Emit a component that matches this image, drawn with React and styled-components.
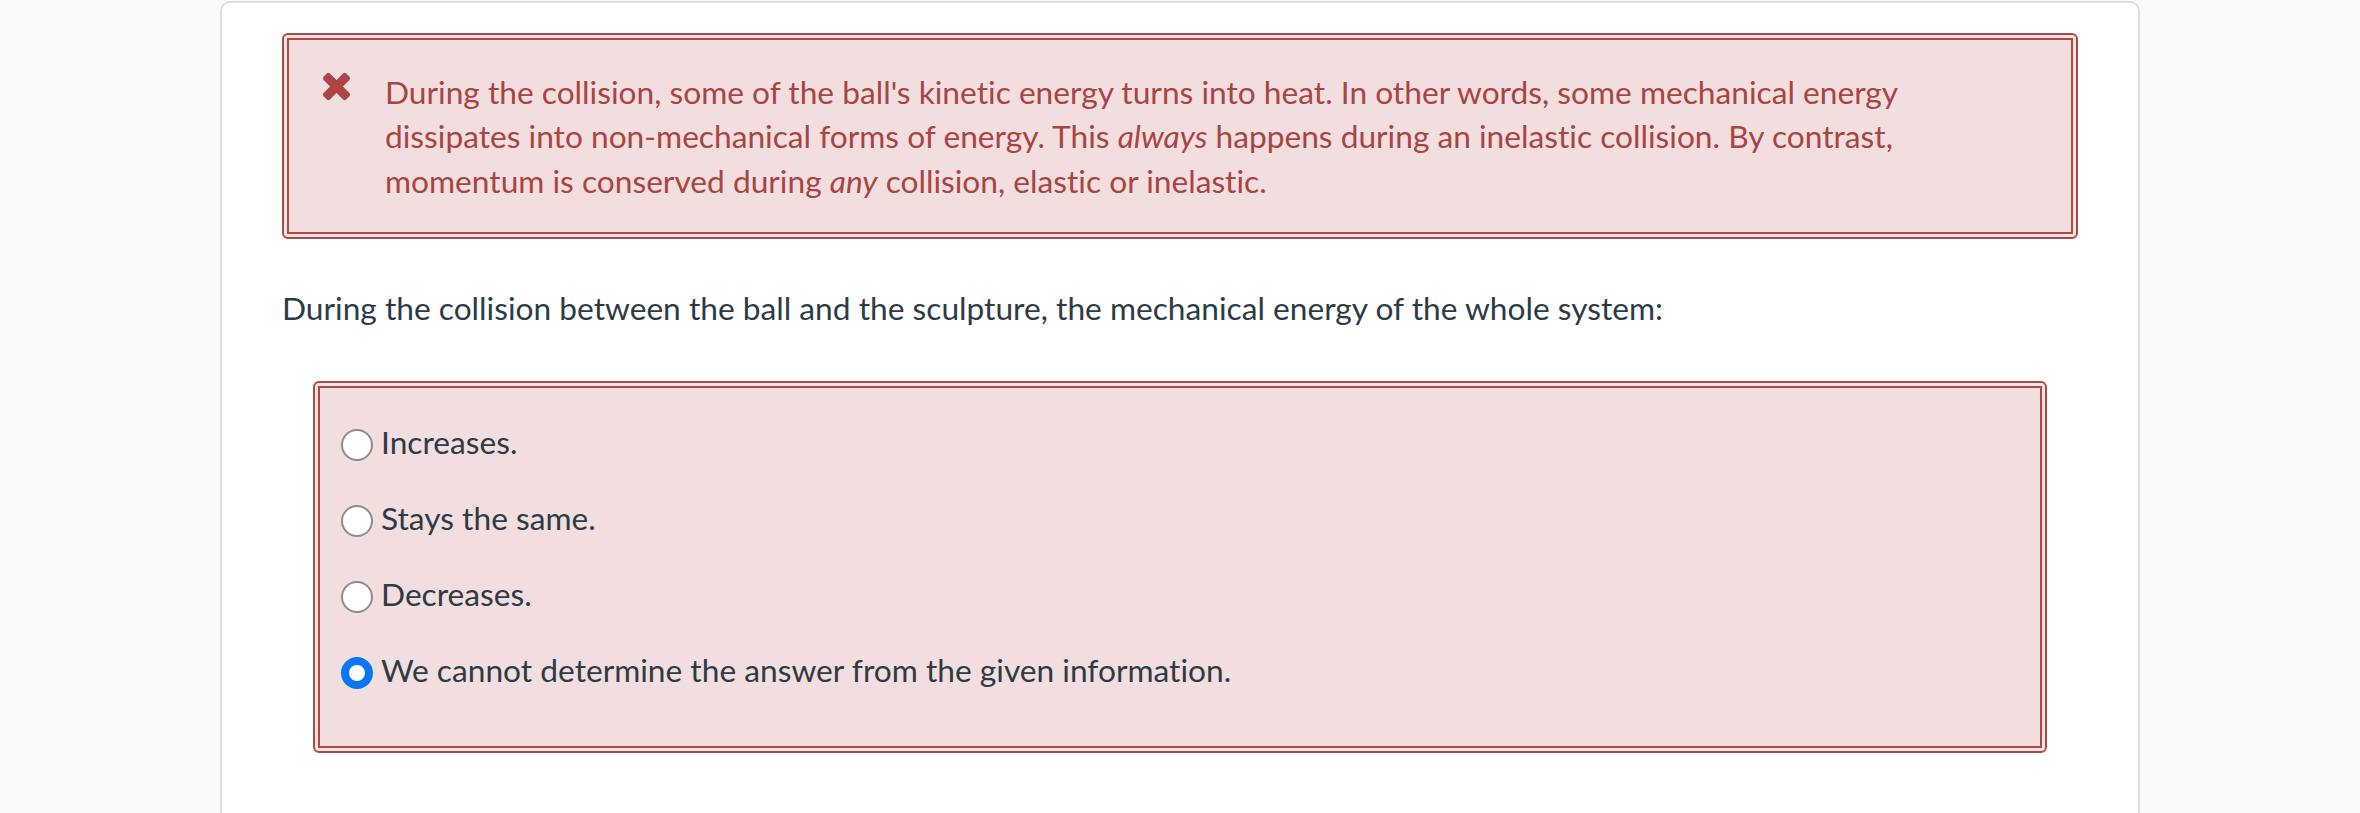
import React from "react"
import styled, { createGlobalStyle } from "styled-components"

const GlobalStyle = createGlobalStyle`
  html, body {
    margin: 0;
    padding: 0;
    background: #fafafa;
  }

  body {
    font-family: Lato, "Open Sans", sans-serif;
    font-variant-ligatures: none;
    overflow: hidden;
  }
`

const Page = styled.div`
  padding-top: 1px;
`

const Card = styled.div`
  box-sizing: border-box;
  width: 1920px;
  min-height: 860px;
  margin: 0 auto;
  padding: 30px 60px 0;
  background: #fff;
  border: 2px solid #dedede;
  border-radius: 10px;
`

// double red frame: rounded outer ring, square inner ring
const Frame = styled.div`
  border: 2px solid #b04848;
  border-radius: 6px;
  padding: 3px;
  background: #f5e4e5;
  margin: ${props => props.margin || 0};
`

const FrameInner = styled.div`
  border: 2px solid #b04848;
  background: #f2dede;
`

const AlertBody = styled(FrameInner)`
  display: flex;
  align-items: flex-start;
  gap: 34px;
  padding: 30px 100px 28.5px 33px;
`

const CrossIcon = styled.svg`
  flex-shrink: 0;
  width: 29px;
  height: 29px;
  margin-top: 1.5px;
`

const AlertText = styled.p`
  margin: 0;
  color: #a94442;
  font-size: 31.7px;
  line-height: 1.4;
`

const Question = styled.p`
  margin: 47.5px 0 0;
  color: #2d3b45;
  font-size: 31.7px;
  line-height: 1.4;
`

const AnswerList = styled(FrameInner)`
  padding: 17px 21px 37.5px;
`

const Answer = styled.label`
  display: flex;
  align-items: flex-start;
  gap: 8px;
  padding: 15.8px 0;
  color: #2d3b45;
  font-size: 31.7px;
  line-height: 1.4;
`

const Radio = styled.span`
  box-sizing: border-box;
  flex-shrink: 0;
  width: 32px;
  height: 32px;
  margin-top: 8.6px;
  border-radius: 50%;
  background: #fff;
  border: ${props => (props.checked ? "8.5px solid #0b76f4" : "2px solid #8c8c8c")};
`

const answers = [
  "Increases.",
  "Stays the same.",
  "Decreases.",
  "We cannot determine the answer from the given information.",
]

const Cross = () => (
  <CrossIcon viewBox="0 0 29 29">
    <g fill="#ae4444" transform="rotate(45 14.5 14.5)">
      <rect x="-1.5" y="10" width="32" height="9" rx="2.2" />
      <rect x="10" y="-1.5" width="9" height="32" rx="2.2" />
    </g>
  </CrossIcon>
)

export default function App() {
  return (
    <Page>
      <GlobalStyle />
      <Card>
        <Frame>
          <AlertBody>
            <Cross />
            <AlertText>
              During the collision, some of the ball's kinetic energy turns into
              heat. In other words, some mechanical energy dissipates into
              non-mechanical forms of energy. This <em>always</em> happens
              during an inelastic collision. By contrast, momentum is conserved
              during <em>any</em> collision, elastic or inelastic.
            </AlertText>
          </AlertBody>
        </Frame>

        <Question>
          During the collision between the ball and the sculpture, the
          mechanical energy of the whole system:
        </Question>

        <Frame margin="50px 31px 0">
          <AnswerList>
            {answers.map((text, i) => (
              <Answer key={text}>
                <Radio checked={i === answers.length - 1} />
                {text}
              </Answer>
            ))}
          </AnswerList>
        </Frame>
      </Card>
    </Page>
  )
}
